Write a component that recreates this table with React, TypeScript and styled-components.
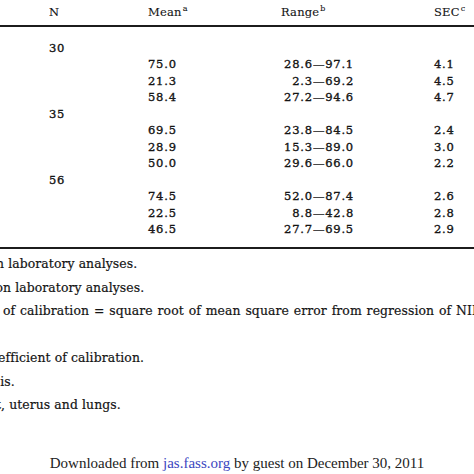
import { FC } from 'react'
import styled, { createGlobalStyle } from 'styled-components'

const GlobalStyle = createGlobalStyle`
	html, body {
		margin: 0;
		padding: 0;
		background: #fff;
	}
`

const Page = styled.div`
	width: 474px;
	height: 474px;
	overflow: hidden;
	background: #fff;
	color: #141414;
	font-family: 'DejaVu Serif', 'Liberation Serif', serif;
	font-size: 11.5px;
	padding-top: 4px;
	box-sizing: border-box;
`

const TableGrid = styled.div`
	display: grid;
	grid-template-columns: 99px 133px 73px 80px auto;
	padding-left: 49px;
	line-height: 16.5px;
	letter-spacing: 0.8px;
	white-space: nowrap;
	-webkit-text-stroke: 0.35px #141414;
`

const Cell = styled.div<{ $right?: boolean }>`
	text-align: ${({ $right }) => ($right ? 'right' : 'left')};
`

const HeadCell = styled.div`
	letter-spacing: 0.2px;
	-webkit-text-stroke: 0.1px #141414;
`

const Sup = styled.sup`
	font-size: 8px;
	line-height: 0;
	vertical-align: 5px;
	margin-left: 1px;
`

const Rule = styled.div<{ $top: number; $bottom: number; $thick: number }>`
	height: ${({ $thick }) => $thick}px;
	background: #1c1c1c;
	margin-top: ${({ $top }) => $top}px;
	margin-bottom: ${({ $bottom }) => $bottom}px;
`

const Notes = styled.div`
	font-size: 12.4px;
	line-height: 23.5px;
	white-space: nowrap;
	letter-spacing: 0.1px;
	-webkit-text-stroke: 0.2px #141414;
`

const Note = styled.div<{ $shift: number; $wordGap?: number }>`
	margin-left: ${({ $shift }) => $shift}px;
	word-spacing: ${({ $wordGap }) => $wordGap ?? 0}px;
	min-height: 23.5px;
`

const Download = styled.div`
	margin-top: 37px;
	text-align: center;
	font-family: 'Liberation Serif', 'Times New Roman', serif;
	font-size: 15px;
	line-height: 18px;
	color: #222;
	a {
		color: #3a45c0;
		text-decoration: none;
	}
`

const groups = [
	{ n: '30', rows: [['75.0', '28.6—97.1', '4.1'], ['21.3', '2.3—69.2', '4.5'], ['58.4', '27.2—94.6', '4.7']] },
	{ n: '35', rows: [['69.5', '23.8—84.5', '2.4'], ['28.9', '15.3—89.0', '3.0'], ['50.0', '29.6—66.0', '2.2']] },
	{ n: '56', rows: [['74.5', '52.0—87.4', '2.6'], ['22.5', '8.8—42.8', '2.8'], ['46.5', '27.7—69.5', '2.9']] },
]

const notes = [
	{ text: 'on laboratory analyses.', shift: -11.5 },
	{ text: 'on laboratory analyses.', shift: -4.5 },
	{ text: 'of calibration = square root of mean square error from regression of NIR', shift: 3, wordGap: 0.8 },
	{ text: '', shift: 0 },
	{ text: 'coefficient of calibration.', shift: -16.5 },
	{ text: 'analysis.', shift: -40.5 },
	{ text: 'heart, uterus and lungs.', shift: -33 },
]

export default function App() {
	return (
		<Page>
			<GlobalStyle />
			<TableGrid>
				<HeadCell>N</HeadCell>
				<HeadCell>
					Mean<Sup>a</Sup>
				</HeadCell>
				<HeadCell>
					Range<Sup>b</Sup>
				</HeadCell>
				<div />
				<HeadCell>
					SEC<Sup>c</Sup>
				</HeadCell>
			</TableGrid>
			<Rule $top={4.5} $bottom={12.75} $thick={2} />
			<TableGrid>
				{groups.map((g) => (
					<GroupRows key={g.n} n={g.n} rows={g.rows} />
				))}
			</TableGrid>
			<Rule $top={9.25} $bottom={3.25} $thick={2.2} />
			<Notes>
				{notes.map((n, i) => (
					<Note key={i} $shift={n.shift} $wordGap={n.wordGap}>
						{n.text}
					</Note>
				))}
			</Notes>
			<Download>
				Downloaded from <a href="#">jas.fass.org</a> by guest on December 30, 2011
			</Download>
		</Page>
	)
}

const GroupRows: FC<{ n: string; rows: string[][] }> = ({ n, rows }) => (
	<>
		<Cell>{n}</Cell>
		<Cell />
		<Cell />
		<Cell />
		<Cell />
		{rows.map((r) => (
			<Row key={r[0]} r={r} />
		))}
	</>
)

const Row: FC<{ r: string[] }> = ({ r }) => (
	<>
		<Cell />
		<Cell>{r[0]}</Cell>
		<Cell $right>{r[1]}</Cell>
		<Cell />
		<Cell>{r[2]}</Cell>
	</>
)
